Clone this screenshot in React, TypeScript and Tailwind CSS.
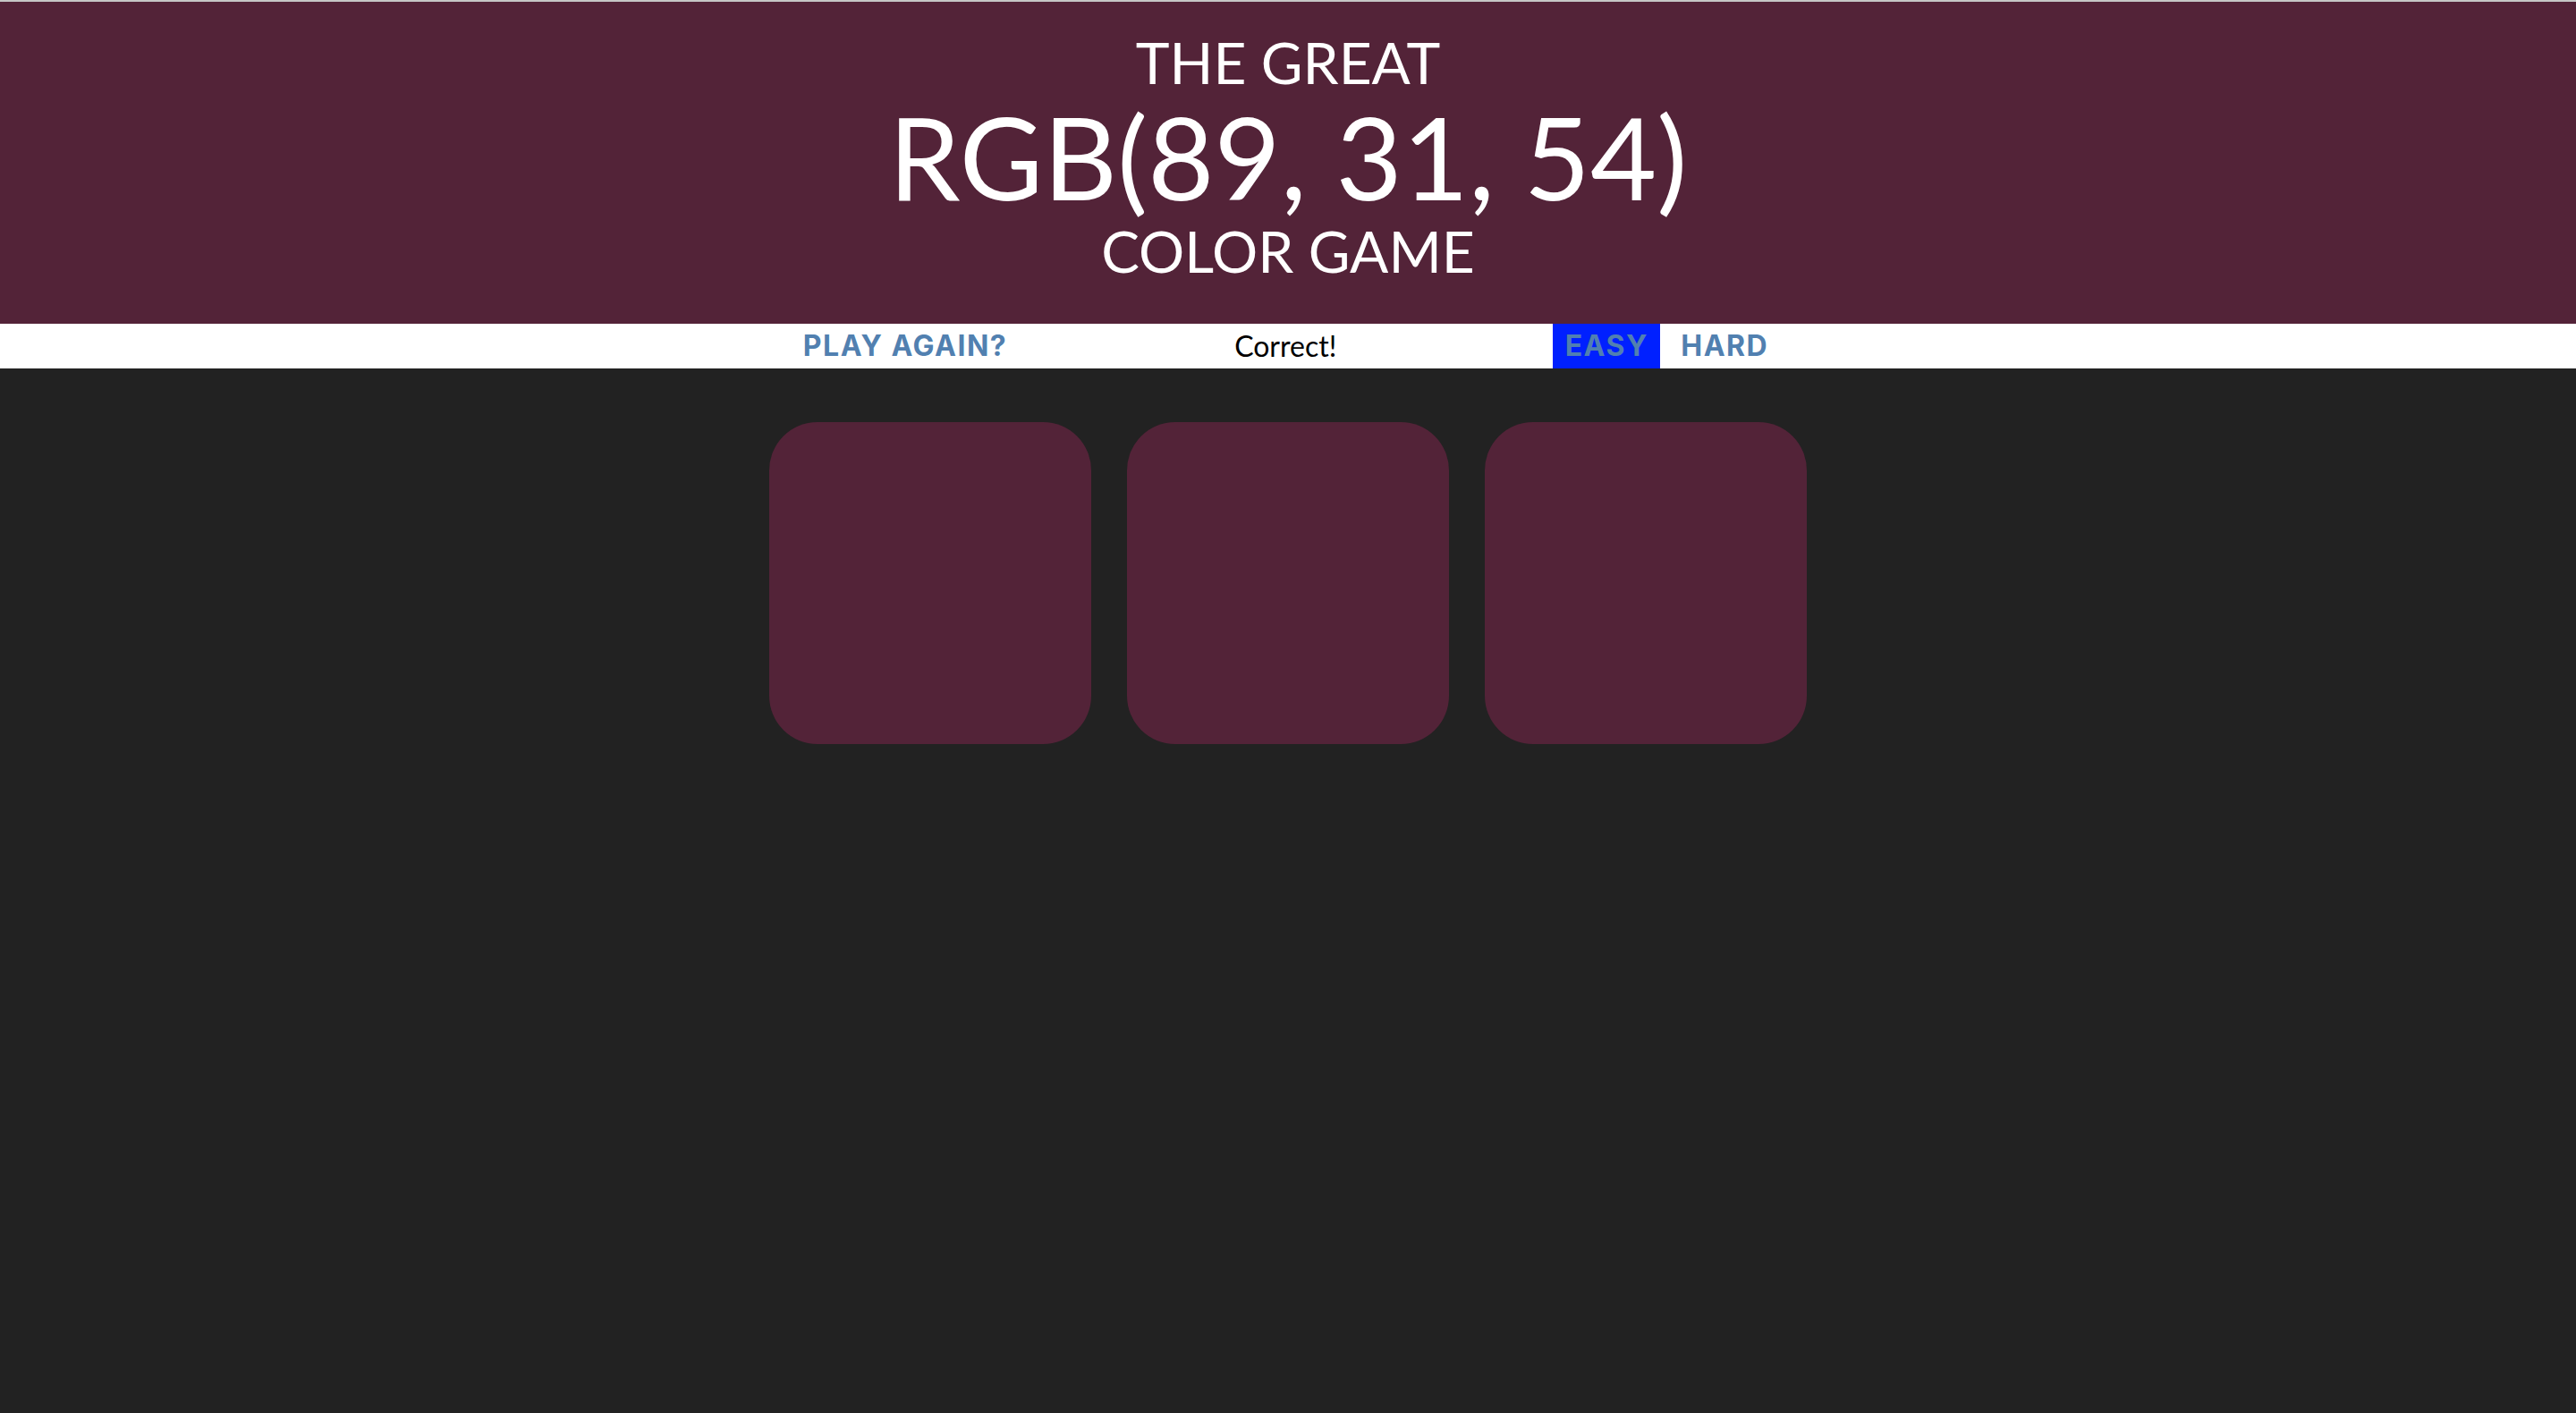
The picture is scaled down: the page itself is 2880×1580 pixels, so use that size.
const SWATCH = '#532338'

export default function App() {
  const squares = [SWATCH, SWATCH, SWATCH]

  return (
    <div className="min-h-screen bg-[#222222] font-['Lato',sans-serif]">
      <div className="h-[2px] bg-[#c6c6c6]" />

      {/* Title banner */}
      <h1 className="bg-[#532338] pt-[33px] pb-[45px] text-center font-normal uppercase text-white">
        <span className="block text-[64px] leading-[70.4px]">The Great</span>
        <span className="block text-[128px] leading-[140.8px]">RGB(89, 31, 54)</span>
        <span className="block text-[64px] leading-[70.4px]">Color Game</span>
      </h1>

      {/* Control stripe */}
      <div className="flex h-[50px] justify-center gap-[11px] bg-white pl-[6px]">
        <button className="h-full px-3 font-['Inter',sans-serif] text-[32px] font-bold uppercase tracking-[1.5px] text-[#5180b0]">
          Play Again?
        </button>
        <span className="flex w-[576px] items-center justify-center text-[32px] text-black">
          Correct!
        </span>
        <div className="flex h-full">
          <button className="h-full w-[120px] bg-[#0020ff] font-['Inter',sans-serif] text-[32px] font-bold uppercase tracking-[1.5px] text-[#5180b0]">
            Easy
          </button>
          <button className="h-full px-[23px] font-['Inter',sans-serif] text-[32px] font-bold uppercase tracking-[1.5px] text-[#5180b0]">
            Hard
          </button>
        </div>
      </div>

      {/* Color squares */}
      <div className="mx-auto mt-[40px] flex max-w-[1200px] gap-[40px] px-[20px] pt-[20px]">
        {squares.map((c, i) => (
          <div
            key={i}
            className="aspect-square w-[360px] rounded-[15%]"
            style={{ backgroundColor: c }}
          />
        ))}
      </div>
    </div>
  )
}
